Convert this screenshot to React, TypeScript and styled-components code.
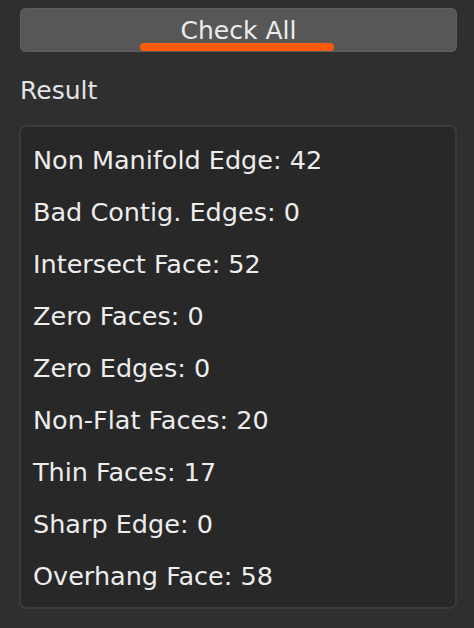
import React from 'react';
import styled, { createGlobalStyle } from 'styled-components';

const results: { label: string; count: number }[] = [
    { label: 'Non Manifold Edge', count: 42 },
    { label: 'Bad Contig. Edges', count: 0 },
    { label: 'Intersect Face', count: 52 },
    { label: 'Zero Faces', count: 0 },
    { label: 'Zero Edges', count: 0 },
    { label: 'Non-Flat Faces', count: 20 },
    { label: 'Thin Faces', count: 17 },
    { label: 'Sharp Edge', count: 0 },
    { label: 'Overhang Face', count: 58 },
];

const GlobalStyle = createGlobalStyle`
    html, body { margin: 0; padding: 0; background: #2f2f2f; }
    body { font-family: "DejaVu Sans", "Noto Sans", sans-serif; color: #e6e6e6; }
`;

const App: React.FC = () => (
    <>
        <GlobalStyle />
        <Page>
            <CheckButton>
                <ButtonLabel>Check All</ButtonLabel>
                <Underline />
            </CheckButton>
            <SectionTitle>Result</SectionTitle>
            <ResultPanel>
                {results.map(r => (
                    <ResultRow key={r.label}>{r.label}: {r.count}</ResultRow>
                ))}
            </ResultPanel>
        </Page>
    </>
);

const Page = styled.div`
    width: 474px; height: 628px; box-sizing: border-box; padding: 8px 17px 0 19px;
    display: flex; flex-direction: column;
`;

const CheckButton = styled.div`
    position: relative; height: 44px; margin-left: 1px; border-radius: 6px; background: #575757;
    box-shadow: inset 0 0 0 1px #5e5e5e;
    display: flex; justify-content: center; align-items: flex-start;
`;

const ButtonLabel = styled.span`
    font-size: 25px; line-height: 25px; padding-top: 10px; color: #ececec;
`;

const Underline = styled.div`
    position: absolute; left: 120px; width: 194px; top: 35px; height: 8px; border-radius: 4px; background: #ff5a0a;
`;

const SectionTitle = styled.div`
    font-size: 25px; line-height: 25px; margin: 26px 0 0 1px; color: #e4e4e4;
`;

const ResultPanel = styled.div`
    margin-top: 22px; height: 484px; box-sizing: border-box; background: #282828; border: 2px solid #3b3b3b; border-radius: 7px;
    padding: 21px 0 0 12px; display: flex; flex-direction: column; gap: 28px;
`;

const ResultRow = styled.div`
    font-size: 25.5px; line-height: 24px; color: #ededed; white-space: nowrap;
`;

export default App;
